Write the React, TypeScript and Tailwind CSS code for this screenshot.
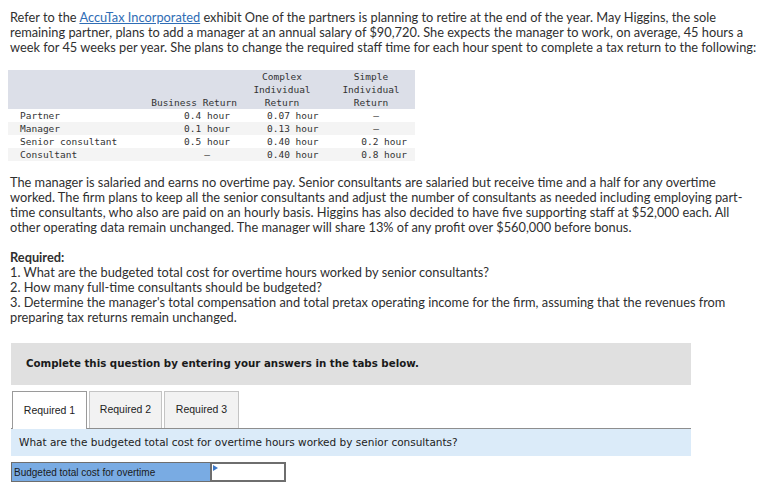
const rows = [
  { role: 'Partner', biz: '0.4 hour', complex: '0.07 hour', simple: '–' },
  { role: 'Manager', biz: '0.1 hour', complex: '0.13 hour', simple: '–' },
  { role: 'Senior consultant', biz: '0.5 hour', complex: '0.40 hour', simple: '0.2 hour' },
  { role: 'Consultant', biz: '–', complex: '0.40 hour', simple: '0.8 hour' },
]

const body = "font-['Lato',sans-serif] text-[12.8px] leading-[15px] text-[#2f2f2f]"
const mono = "font-['DejaVu_Sans_Mono',monospace] text-[9.5px] leading-[13px] text-[#333]"

function HoursTable() {
  return (
    <div className={`ml-[8px] mt-[15px] w-[407px] ${mono}`}>
      <div className="grid grid-cols-[142px_95px_80px_90px] bg-[#dcdfe8]">
        <div className="h-[39px]" />
        <div className="flex items-end justify-end pr-[8px]">Business Return</div>
        <div className="text-center pr-[6px]">Complex<br />Individual<br />Return</div>
        <div className="text-center pl-[2px]">Simple<br />Individual<br />Return</div>
      </div>
      {rows.map((r, i) => (
        <div key={r.role} className={`grid grid-cols-[142px_95px_80px_90px] h-[13px] ${i % 2 ? 'bg-[#f4f4f4]' : 'bg-white'}`}>
          <div className="pl-[12px]">{r.role}</div>
          <div className="text-center pl-[19px]">{r.biz}</div>
          <div className="pl-[22px]">{r.complex}</div>
          {r.simple === '–' ? (
            <div className="text-center pl-[12px]">{r.simple}</div>
          ) : (
            <div className="text-right pr-[8px]">{r.simple}</div>
          )}
        </div>
      ))}
    </div>
  )
}

export default function App() {
  return (
    <div className="w-[759px] h-[486px] bg-white overflow-hidden pt-[10px]">
      <p className={`${body} pl-[10px] w-[759px] whitespace-nowrap`}>
        Refer to the <span className="text-[#2f6db5] underline">AccuTax Incorporated</span> exhibit One of the partners is planning to retire at the end of the year. May Higgins, the sole<br />
        remaining partner, plans to add a manager at an annual salary of $90,720. She expects the manager to work, on average, 45 hours a<br />
        week for 45 weeks per year. She plans to change the required staff time for each hour spent to complete a tax return to the following:
      </p>

      <HoursTable />

      <p className={`${body} pl-[10px] mt-[14px] w-[759px] whitespace-nowrap`}>
        The manager is salaried and earns no overtime pay. Senior consultants are salaried but receive time and a half for any overtime<br />
        worked. The firm plans to keep all the senior consultants and adjust the number of consultants as needed including employing part-<br />
        time consultants, who also are paid on an hourly basis. Higgins has also decided to have five supporting staff at $52,000 each. All<br />
        other operating data remain unchanged. The manager will share 13% of any profit over $560,000 before bonus.
      </p>

      <div className={`${body} pl-[10px] mt-[15px] w-[759px] whitespace-nowrap`}>
        <p className="font-bold">Required:</p>
        <p>1. What are the budgeted total cost for overtime hours worked by senior consultants?</p>
        <p>2. How many full-time consultants should be budgeted?</p>
        <p>
          3. Determine the manager's total compensation and total pretax operating income for the firm, assuming that the revenues from<br />
          preparing tax returns remain unchanged.
        </p>
      </div>

      <div className="ml-[11px] w-[680px] mt-[18px]">
        <div className="h-[42px] bg-[#e0e0e0] flex items-center pl-[15px] font-['DejaVu_Sans',sans-serif] font-bold text-[10.25px] text-[#1a1a1a]">
          Complete this question by entering your answers in the tabs below.
        </div>

        <div className="mt-[6px] flex items-end gap-[2px] pl-[1px] border-b border-[#8e8e8e] font-['Liberation_Sans',sans-serif] text-[10.5px] text-[#222]">
          <div className="w-[75px] h-[38px] -mb-px bg-white border border-b-0 border-[#9a9a9a] flex items-center justify-center">Required 1</div>
          <div className="w-[73px] h-[37px] bg-[#f2f2f2] border border-b-0 border-[#c4c4c4] flex items-center justify-center">Required 2</div>
          <div className="w-[75px] h-[37px] bg-[#f2f2f2] border border-b-0 border-[#c4c4c4] flex items-center justify-center">Required 3</div>
        </div>

        <div className="h-[27px] bg-[#dbebf9] flex items-center pl-[8px] font-['DejaVu_Sans',sans-serif] text-[10.5px] text-[#222]">
          What are the budgeted total cost for overtime hours worked by senior consultants?
        </div>

        <div className="mt-[6px] flex h-[20px]">
          <div className="w-[200px] bg-[#79abe3] border border-[#6e6e6e] flex items-center pl-[2px] font-['Liberation_Sans',sans-serif] text-[10px] text-[#1a1a1a]">
            Budgeted total cost for overtime
          </div>
          <div className="relative w-[75px] bg-white border-2 border-l border-[#6e6e6e]">
            <span className="absolute left-[1px] top-[1px] w-0 h-0 border-y-[3px] border-y-transparent border-l-[5px] border-l-[#3c78c8]" />
          </div>
        </div>
      </div>
    </div>
  )
}
